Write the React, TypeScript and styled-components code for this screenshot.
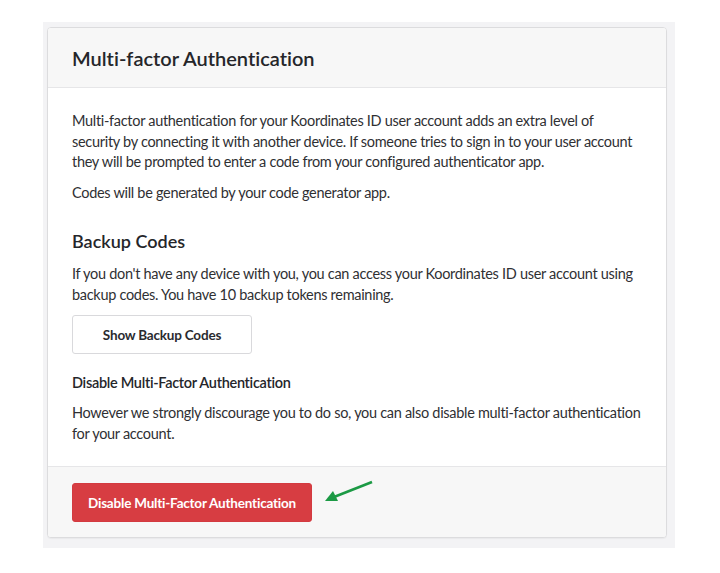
import React from "react";
import styled, { createGlobalStyle } from "styled-components";

const Global = createGlobalStyle`
  html, body { margin: 0; padding: 0; background: #ffffff; }
  body {
    font-family: Lato, "Open Sans", sans-serif;
    color: #2f3033;
    font-variant-ligatures: none;
  }
  * { box-sizing: border-box; }
`;

const Page = styled.div`
  padding: 22px 0 0 43px;
`;

const Frame = styled.div`
  width: 632px;
  background: #f3f3f5;
  padding: 5px 8px 10px 4px;
`;

const Card = styled.div`
  background: #ffffff;
  border: 1px solid #dcdcde;
  border-radius: 4px;
  overflow: hidden;
  box-shadow: 0 1px 1px rgba(0, 0, 0, 0.04);
`;

const Header = styled.div`
  height: 60px;
  display: flex;
  align-items: center;
  padding: 0 24px;
  background: #f7f7f7;
  border-bottom: 1px solid #e6e6e8;
`;

const Title = styled.h2`
  margin: 0;
  font-size: 20px;
  font-weight: 600;
  color: #25262a;
`;

const Body = styled.div`
  padding: 23px 24px 22px;
  display: flex;
  flex-direction: column;
`;

const Para = styled.p<{ $top?: number }>`
  margin: ${(p) => p.$top ?? 0}px 0 0;
  font-size: 14.5px;
  line-height: 20.5px;
  letter-spacing: -0.3px;
  color: #2f3033;
`;

const SubTitle = styled.h3<{ $top: number; $size: number; $lh: number; $ls: number }>`
  margin: ${(p) => p.$top}px 0 0;
  font-size: ${(p) => p.$size}px;
  line-height: ${(p) => p.$lh}px;
  letter-spacing: ${(p) => p.$ls}px;
  font-weight: 600;
  color: #25262a;
`;

const Button = styled.button<{ $danger?: boolean; $width: number }>`
  width: ${(p) => p.$width}px;
  height: 39px;
  border-radius: 3px;
  font-family: inherit;
  font-variant-ligatures: none;
  font-size: 13.5px;
  letter-spacing: -0.2px;
  font-weight: 700;
  cursor: pointer;
  border: 1px solid ${(p) => (p.$danger ? "#d33a40" : "#d9d9dc")};
  background: ${(p) => (p.$danger ? "#d73d42" : "#ffffff")};
  color: ${(p) => (p.$danger ? "#ffffff" : "#2a2b2f")};
`;

const ButtonRow = styled.div`
  margin-top: 10px;
  display: flex;
`;

const Footer = styled.div`
  background: #f7f7f7;
  border-top: 1px solid #e6e6e8;
  padding: 16px 24px 15px;
  display: flex;
  align-items: center;
  position: relative;
`;

const Arrow = styled.svg`
  position: absolute;
  left: 276px;
  top: 12px;
`;

export default function App() {
  return (
    <>
      <Global />
      <Page>
        <Frame>
          <Card>
            <Header>
              <Title>Multi-factor Authentication</Title>
            </Header>
            <Body>
              <Para>
                Multi-factor authentication for your Koordinates ID user account adds an extra level of
                security by connecting it with another device. If someone tries to sign in to your user account
                they will be prompted to enter a code from your configured authenticator app.
              </Para>
              <Para $top={10}>Codes will be generated by your code generator app.</Para>
              <SubTitle $top={26} $size={18} $lh={24} $ls={0}>
                Backup Codes
              </SubTitle>
              <Para $top={11}>
                If you don't have any device with you, you can access your Koordinates ID user account using
                backup codes. You have 10 backup tokens remaining.
              </Para>
              <ButtonRow>
                <Button $width={180}>Show Backup Codes</Button>
              </ButtonRow>
              <SubTitle $top={19} $size={14.5} $lh={20} $ls={-0.3}>
                Disable Multi-Factor Authentication
              </SubTitle>
              <Para $top={10}>
                However we strongly discourage you to do so, you can also disable multi-factor authentication
                for your account.
              </Para>
            </Body>
            <Footer>
              <Button $danger $width={240}>
                Disable Multi-Factor Authentication
              </Button>
              <Arrow width="52" height="26" viewBox="0 0 52 26">
                <line x1="48" y1="3" x2="10" y2="18" stroke="#1c9a45" strokeWidth="2.6" strokeLinecap="butt" />
                <polygon points="1,22 9,12 14,22" fill="#1c9a45" />
              </Arrow>
            </Footer>
          </Card>
        </Frame>
      </Page>
    </>
  );
}
